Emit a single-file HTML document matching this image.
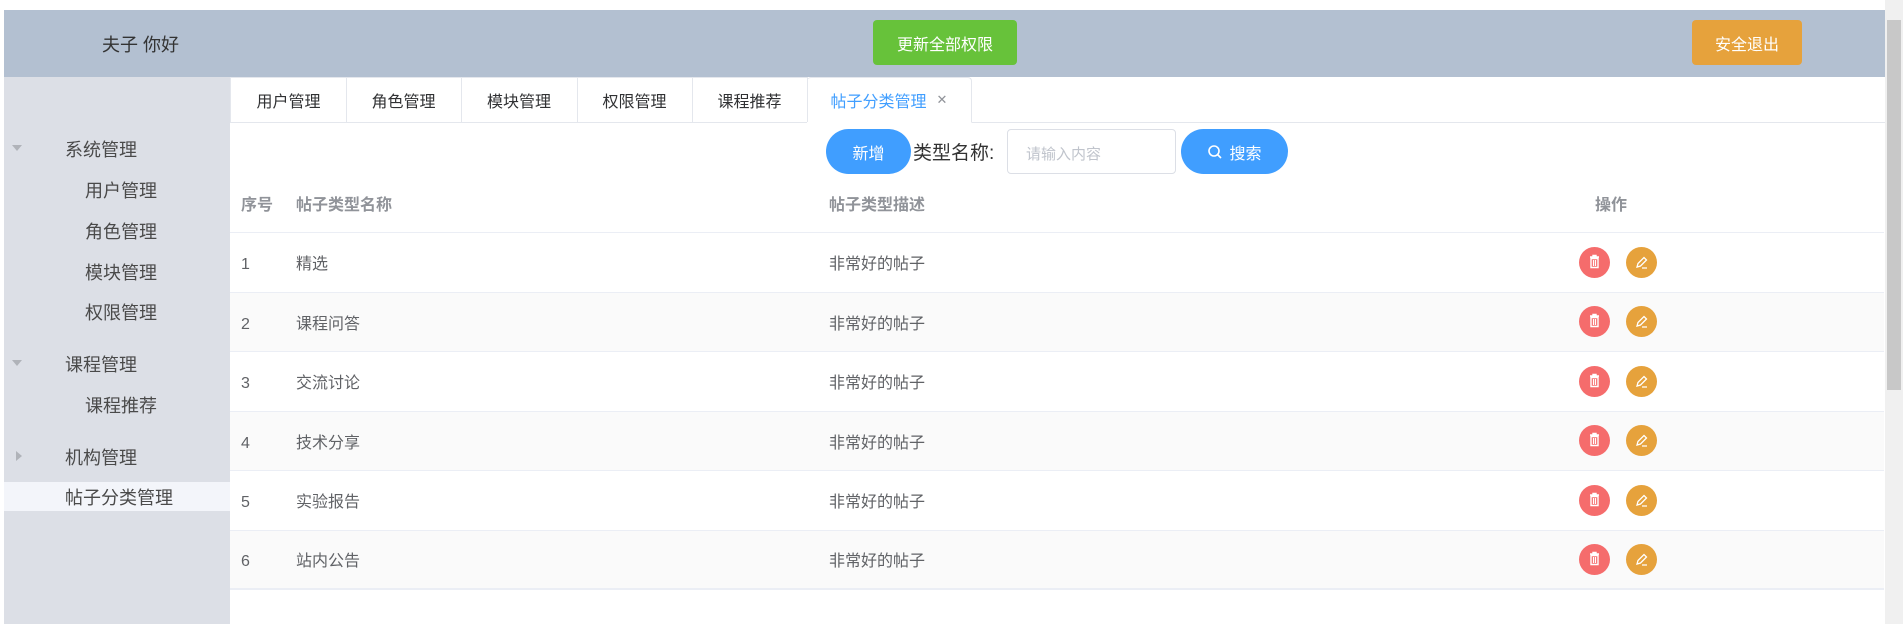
<!DOCTYPE html>
<html><head><meta charset="utf-8"><style>
*{margin:0;padding:0;box-sizing:border-box}
body{width:1903px;height:624px;overflow:hidden;background:#fff;font-family:"Liberation Sans","Noto Sans CJK SC",sans-serif;position:relative;color:#606266}
.a{position:absolute}
.hdr{left:4px;top:10px;width:1881px;height:67px;background:#b3c0d1}
.btn{color:#fff;font-size:16px;display:flex;align-items:center;justify-content:center;border-radius:4px}
.side{left:4px;top:77px;width:226px;height:547px;background:#dcdfe6}
.m{font-size:18px;color:#4a4a4a;white-space:nowrap}
.tab{top:77px;height:46px;border-right:1px solid #e4e7ed;border-bottom:1px solid #e4e7ed;font-size:16px;color:#303133;display:flex;align-items:center;justify-content:center}
.row{left:230px;width:1654px;height:59.5px;border-bottom:1px solid #ebeef5;font-size:16px;color:#606266}
.row span{position:absolute;top:50%;transform:translateY(-50%)}
.row span.n{margin-top:3px}
.ic{position:absolute;top:50%;width:31px;height:31px;margin-top:-15.5px;border-radius:50%}
</style></head><body>
<div class="a hdr"></div>
<div class="a" style="left:102px;top:31px;font-size:18px;color:#333">夫子 你好</div>
<div class="a btn" style="left:873px;top:20px;width:144px;height:45px;background:#67c23a">更新全部权限</div>
<div class="a btn" style="left:1692px;top:20px;width:110px;height:45px;background:#e6a23c">安全退出</div>
<div class="a" style="left:1885px;top:0;width:18px;height:624px;background:#f0f0f0"></div>
<div class="a" style="left:1887px;top:20px;width:14px;height:370px;background:#c8c8c8"></div>

<div class="a side"></div>
<div class="a" style="left:12px;top:145px;border:5px solid transparent;border-top:6px solid #b0b3b9"></div>
<div class="a m" style="left:65px;top:136px">系统管理</div>
<div class="a m" style="left:85px;top:177px">用户管理</div>
<div class="a m" style="left:85px;top:218px">角色管理</div>
<div class="a m" style="left:85px;top:259px">模块管理</div>
<div class="a m" style="left:85px;top:299px">权限管理</div>
<div class="a" style="left:12px;top:360px;border:5px solid transparent;border-top:6px solid #b0b3b9"></div>
<div class="a m" style="left:65px;top:351px">课程管理</div>
<div class="a m" style="left:85px;top:392px">课程推荐</div>
<div class="a" style="left:16px;top:451px;border:5px solid transparent;border-left:6px solid #b0b3b9"></div>
<div class="a m" style="left:65px;top:444px">机构管理</div>
<div class="a" style="left:4px;top:482px;width:226px;height:29px;background:#f3f5fa"></div>
<div class="a m" style="left:65px;top:484px">帖子分类管理</div>

<div class="a" style="left:230px;top:122px;width:1655px;height:1px;background:#e4e7ed"></div>
<div class="a tab" style="left:230px;width:117px;border-left:1px solid #e4e7ed;border-top:1px solid #e4e7ed">用户管理</div>
<div class="a tab" style="left:346px;width:116px;border-top:1px solid #e4e7ed">角色管理</div>
<div class="a tab" style="left:461px;width:117px;border-top:1px solid #e4e7ed">模块管理</div>
<div class="a tab" style="left:577px;width:116px;border-top:1px solid #e4e7ed">权限管理</div>
<div class="a tab" style="left:692px;width:116px;border-top:1px solid #e4e7ed">课程推荐</div>
<div class="a tab" style="left:807px;width:165px;border-bottom-color:#fff;border-top:1px solid #e4e7ed;color:#409eff;border-radius:4px 4px 0 0">帖子分类管理<span style="font-size:13px;margin-left:10px;color:#909399">✕</span></div>

<div class="a btn" style="left:826px;top:129px;width:85px;height:45px;background:#409eff;border-radius:23px">新增</div>
<div class="a" style="left:913px;top:138px;font-size:19px;color:#333">类型名称:</div>
<div class="a" style="left:1007px;top:129px;width:169px;height:45px;border:1px solid #dcdfe6;border-radius:4px;font-size:15px;color:#c0c4cc;padding:13px 0 0 18px">请输入内容</div>
<div class="a btn" style="left:1181px;top:129px;width:107px;height:45px;background:#409eff;border-radius:23px"><svg width="16" height="16" viewBox="0 0 16 16" style="margin-right:6px"><circle cx="7" cy="7" r="5" fill="none" stroke="#fff" stroke-width="1.6"/><path d="M10.5 10.5L14 14" stroke="#fff" stroke-width="1.6"/></svg>搜索</div>

<div class="a row" style="top:174px;height:59px;color:#909399;font-weight:bold"><span style="left:11px">序号</span><span style="left:66px">帖子类型名称</span><span style="left:599px">帖子类型描述</span><span style="left:1365px">操作</span></div>

<svg width="0" height="0" style="position:absolute"><defs>
<g id="del"><path d="M11 10h9M14 10V8.5h3V10M12 11.5h7v9h-7z" fill="none" stroke="#fff" stroke-width="1.4"/><path d="M14.5 13v6M16.5 13v6" stroke="#fff" stroke-width="1.2"/></g>
<g id="ed"><path d="M11 20l1-3.5 6-6 2.5 2.5-6 6z" fill="none" stroke="#fff" stroke-width="1.3"/><path d="M16 21h5" stroke="#fff" stroke-width="1.3"/></g>
</defs></svg>

<div class="a row" style="top:233px"><span class="n" style="left:11px">1</span><span style="left:66px">精选</span><span style="left:599px">非常好的帖子</span><svg class="ic" style="left:1349px;background:#f56c6c"><use href="#del"/></svg><svg class="ic" style="left:1396px;background:#e6a23c"><use href="#ed"/></svg></div>
<div class="a row" style="top:292.5px;background:#fafafa"><span class="n" style="left:11px">2</span><span style="left:66px">课程问答</span><span style="left:599px">非常好的帖子</span><svg class="ic" style="left:1349px;background:#f56c6c"><use href="#del"/></svg><svg class="ic" style="left:1396px;background:#e6a23c"><use href="#ed"/></svg></div>
<div class="a row" style="top:352px"><span class="n" style="left:11px">3</span><span style="left:66px">交流讨论</span><span style="left:599px">非常好的帖子</span><svg class="ic" style="left:1349px;background:#f56c6c"><use href="#del"/></svg><svg class="ic" style="left:1396px;background:#e6a23c"><use href="#ed"/></svg></div>
<div class="a row" style="top:411.5px;background:#fafafa"><span class="n" style="left:11px">4</span><span style="left:66px">技术分享</span><span style="left:599px">非常好的帖子</span><svg class="ic" style="left:1349px;background:#f56c6c"><use href="#del"/></svg><svg class="ic" style="left:1396px;background:#e6a23c"><use href="#ed"/></svg></div>
<div class="a row" style="top:471px"><span class="n" style="left:11px">5</span><span style="left:66px">实验报告</span><span style="left:599px">非常好的帖子</span><svg class="ic" style="left:1349px;background:#f56c6c"><use href="#del"/></svg><svg class="ic" style="left:1396px;background:#e6a23c"><use href="#ed"/></svg></div>
<div class="a row" style="top:530.5px;background:#fafafa;border-bottom:2px solid #ebeef5"><span class="n" style="left:11px">6</span><span style="left:66px">站内公告</span><span style="left:599px">非常好的帖子</span><svg class="ic" style="left:1349px;background:#f56c6c"><use href="#del"/></svg><svg class="ic" style="left:1396px;background:#e6a23c"><use href="#ed"/></svg></div>
</body></html>
